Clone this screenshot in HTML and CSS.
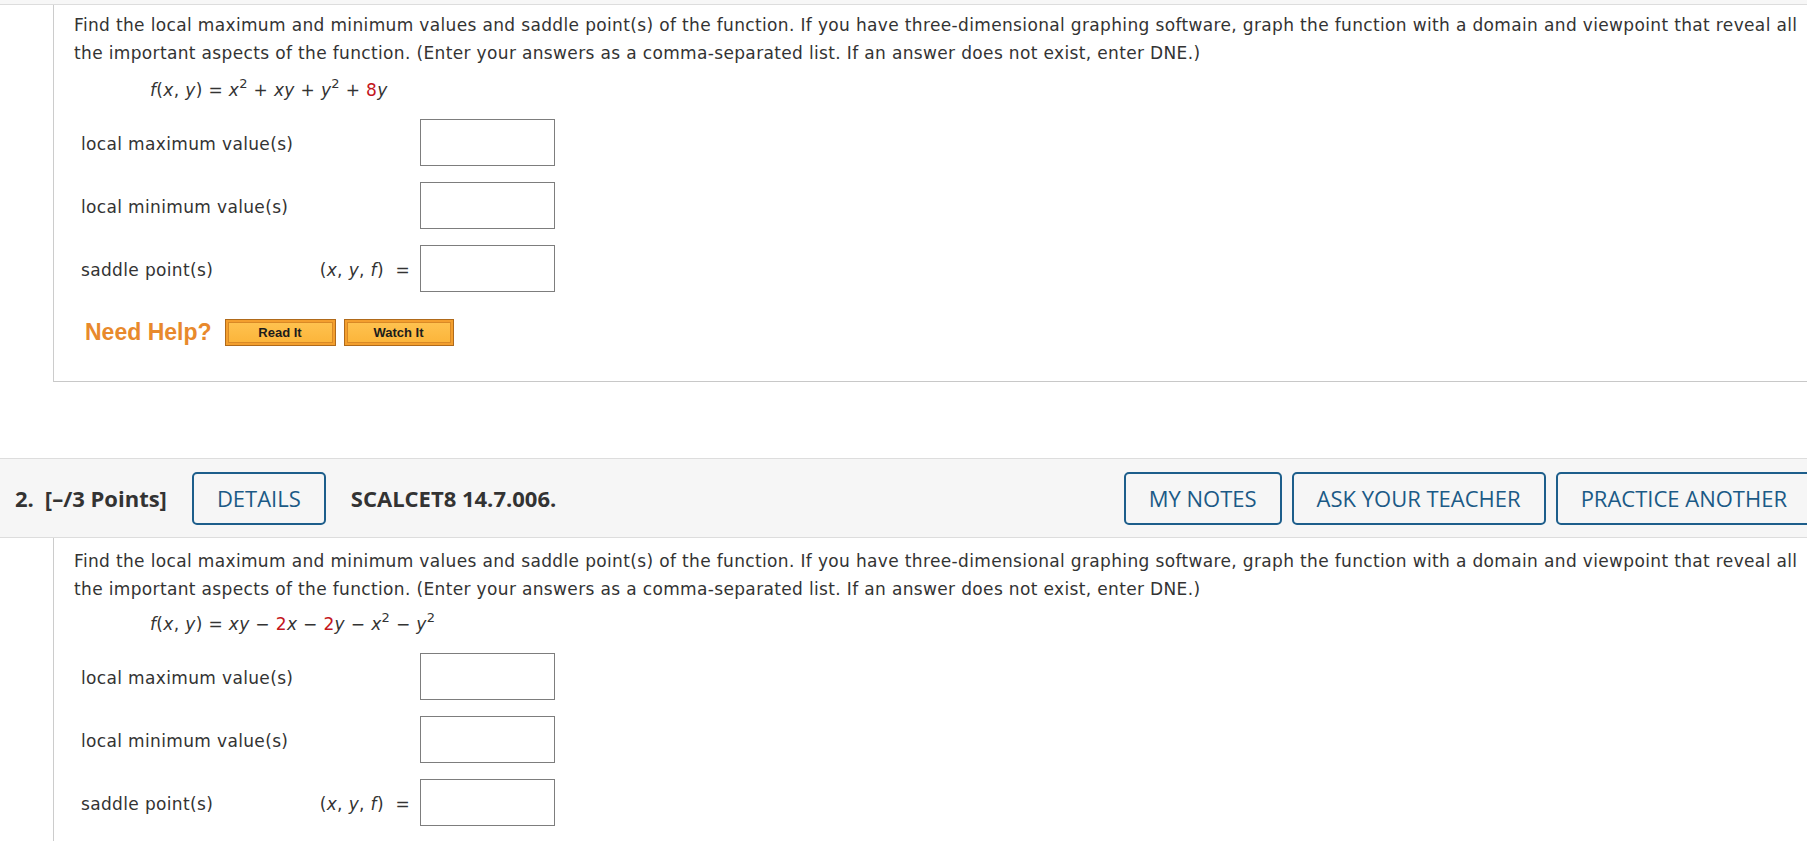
FILE: index.html
```html
<!DOCTYPE html>
<html lang="en">
<head>
<meta charset="utf-8">
<title>Questions</title>
<link rel="stylesheet" href="styles.css">
</head>
<body>
<div class="page">
  <div class="topbar"></div>

  <div class="qbody q1">
    <p class="prompt">Find the local maximum and minimum values and saddle point(s) of the function. If you have three-dimensional graphing software, graph the function with a domain and viewpoint that reveal all the important aspects of the function. (Enter your answers as a comma-separated list. If an answer does not exist, enter DNE.)</p>
    <div class="formula"><i>f</i>(<i>x</i>, <i>y</i>) = <i>x</i><sup>2</sup> + <i>xy</i> + <i>y</i><sup>2</sup> + <span class="red">8</span><i>y</i></div>
    <div class="answers">
      <div class="row"><span class="label">local maximum value(s)</span><span class="math"></span><span class="box"></span></div>
      <div class="row"><span class="label">local minimum value(s)</span><span class="math"></span><span class="box"></span></div>
      <div class="row"><span class="label">saddle point(s)</span><span class="math">(<i>x</i>, <i>y</i>, <i>f</i>)&nbsp; =</span><span class="box"></span></div>
    </div>
    <div class="help">
      <span class="need">Need Help?</span>
      <span class="hbtn">Read It</span>
      <span class="hbtn">Watch It</span>
    </div>
  </div>

  <div class="spacer"></div>

  <div class="qheader">
    <span class="qnum">2.</span>
    <span class="qpts">[–/3 Points]</span>
    <span class="obtn">DETAILS</span>
    <span class="qref">SCALCET8 14.7.006.</span>
    <div class="actions">
      <span class="obtn">MY NOTES</span>
      <span class="obtn">ASK YOUR TEACHER</span>
      <span class="obtn">PRACTICE ANOTHER</span>
    </div>
  </div>

  <div class="qbody q2">
    <p class="prompt">Find the local maximum and minimum values and saddle point(s) of the function. If you have three-dimensional graphing software, graph the function with a domain and viewpoint that reveal all the important aspects of the function. (Enter your answers as a comma-separated list. If an answer does not exist, enter DNE.)</p>
    <div class="formula"><i>f</i>(<i>x</i>, <i>y</i>) = <i>xy</i> − <span class="red">2</span><i>x</i> − <span class="red">2</span><i>y</i> − <i>x</i><sup>2</sup> − <i>y</i><sup>2</sup></div>
    <div class="answers">
      <div class="row"><span class="label">local maximum value(s)</span><span class="math"></span><span class="box"></span></div>
      <div class="row"><span class="label">local minimum value(s)</span><span class="math"></span><span class="box"></span></div>
      <div class="row"><span class="label">saddle point(s)</span><span class="math">(<i>x</i>, <i>y</i>, <i>f</i>)&nbsp; =</span><span class="box"></span></div>
    </div>
  </div>
</div>
</body>
</html>
```

FILE: styles.css
```css
html, body {
  margin: 0;
  padding: 0;
  background: #ffffff;
  overflow: hidden;
}

.page {
  width: 1830px;
  font-family: "DejaVu Sans", Verdana, sans-serif;
  font-size: 17px;
  letter-spacing: 0.35px;
  color: #333333;
}

.topbar {
  height: 4px;
  background: #f7f7f7;
  border-bottom: 1px solid #dddddd;
}

.qbody {
  margin-left: 53px;
  border-left: 1px solid #cccccc;
  padding: 6px 20px 0 20px;
}

.q1 {
  border-bottom: 1px solid #c8c8c8;
  padding-bottom: 35px;
}

.q2 {
  padding-top: 9px;
  padding-bottom: 20px;
}

.prompt {
  margin: 0;
  line-height: 28px;
}

.formula {
  margin: 9px 0 0 76px;
  line-height: 28px;
  white-space: nowrap;
}

.q2 .formula {
  margin-top: 7px;
}

.formula i, .math i {
  font-style: italic;
}

.formula sup {
  font-size: 13px;
  line-height: 0;
  vertical-align: 8px;
}

.red {
  color: #c4161c;
}

.answers {
  margin-top: 15px;
  padding-left: 7px;
  display: flex;
  flex-direction: column;
  gap: 16px;
}

.row {
  display: grid;
  grid-template-columns: 240px 89px 135px;
  column-gap: 5px;
  align-items: center;
}

.label {
  line-height: 20px;
  padding-top: 3px;
  white-space: nowrap;
}

.math {
  justify-self: end;
  white-space: nowrap;
  padding-right: 5px;
  padding-top: 3px;
}

.box {
  display: block;
  height: 45px;
  border: 1px solid #7d7d7d;
  background: #ffffff;
}

.help {
  margin-top: 27px;
  padding-left: 11px;
  display: flex;
  align-items: center;
  height: 27px;
  letter-spacing: 0;
}

.need {
  font-family: "Liberation Sans", Arial, sans-serif;
  font-weight: bold;
  font-size: 23px;
  color: #e8892c;
  margin-right: 13px;
}

.hbtn {
  box-sizing: border-box;
  width: 111px;
  height: 27px;
  margin-right: 8px;
  display: flex;
  align-items: center;
  justify-content: center;
  font-family: "Liberation Sans", Arial, sans-serif;
  font-weight: bold;
  font-size: 13px;
  color: #1c1c1c;
  background: linear-gradient(#ffc452, #fbb338);
  border: 1px solid #b06a1a;
  box-shadow: inset 0 0 0 2px #f39f2e, inset 0 0 0 3px #d98926;
}

.hbtn + .hbtn {
  width: 110px;
}

.spacer {
  height: 76px;
}

.qheader {
  box-sizing: border-box;
  height: 80px;
  border-top: 1px solid #dddddd;
  border-bottom: 1px solid #dddddd;
  background: #f6f6f6;
  display: flex;
  align-items: center;
  padding: 0 18px 0 15px;
  font-family: "Open Sans", sans-serif;
  font-size: 22px;
  letter-spacing: 0;
  color: #333333;
}

.qnum {
  font-weight: bold;
  margin-right: 11px;
}

.qpts {
  font-weight: bold;
  margin-right: 25px;
}

.qref {
  font-weight: bold;
  margin-left: 25px;
}

.obtn {
  box-sizing: border-box;
  height: 53px;
  display: flex;
  align-items: center;
  padding: 0 23px;
  border: 2px solid #1d5e8b;
  border-radius: 5px;
  color: #1b5a86;
  white-space: nowrap;
}

.actions {
  margin-left: auto;
  display: flex;
  gap: 10px;
}
```
